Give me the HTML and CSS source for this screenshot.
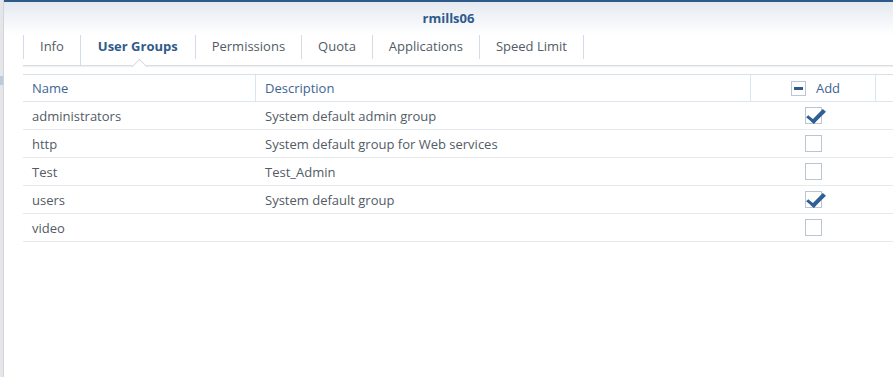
FILE: index.html
```html
<!DOCTYPE html>
<html lang="en">
<head>
    <meta charset="UTF-8">
    <title>rmills06 - User Groups</title>
    <link rel="stylesheet" href="styles.css">
</head>
<body>
    <div class="desktop">
        <div class="edge">
            <div class="edge-sel"></div>
        </div>
        <div class="window">
            <div class="title-bar">
                <h1>rmills06</h1>
            </div>

            <!-- Tabs -->
            <div class="tabs">
                <div class="tab">Info</div>
                <div class="tab active">User Groups</div>
                <div class="tab">Permissions</div>
                <div class="tab">Quota</div>
                <div class="tab">Applications</div>
                <div class="tab">Speed Limit</div>
            </div>

            <!-- Group grid -->
            <div class="grid">
                <div class="row head">
                    <div class="cell name">Name</div>
                    <div class="cell desc">Description</div>
                    <div class="cell add"><span class="box partial"></span>Add</div>
                    <div class="cell rest"></div>
                </div>
                <div class="row">
                    <div class="cell name">administrators</div>
                    <div class="cell desc">System default admin group</div>
                    <div class="cell add"><span class="box checked"></span></div>
                    <div class="cell rest"></div>
                </div>
                <div class="row">
                    <div class="cell name">http</div>
                    <div class="cell desc">System default group for Web services</div>
                    <div class="cell add"><span class="box"></span></div>
                    <div class="cell rest"></div>
                </div>
                <div class="row">
                    <div class="cell name">Test</div>
                    <div class="cell desc">Test_Admin</div>
                    <div class="cell add"><span class="box"></span></div>
                    <div class="cell rest"></div>
                </div>
                <div class="row">
                    <div class="cell name">users</div>
                    <div class="cell desc">System default group</div>
                    <div class="cell add"><span class="box checked"></span></div>
                    <div class="cell rest"></div>
                </div>
                <div class="row">
                    <div class="cell name">video</div>
                    <div class="cell desc"></div>
                    <div class="cell add"><span class="box"></span></div>
                    <div class="cell rest"></div>
                </div>
            </div>
        </div>
    </div>
</body>
</html>
```

FILE: styles.css
```css
/* Reset */
* {
    margin: 0;
    padding: 0;
    box-sizing: border-box;
}

body {
    font-family: "Open Sans", Arial, sans-serif;
    font-size: 13px;
    color: #525b66;
    background-color: #fff;
    width: 893px;
    height: 377px;
    overflow: hidden;
}

.desktop {
    display: flex;
    height: 377px;
}

/* Window behind, only its edge shows */
.edge {
    width: 4px;
    flex: none;
    background-color: #e4e6ea;
    border-right: 1px solid #d2d4d8;
    padding-top: 76px;
}

.edge-sel {
    height: 9px;
    background-color: #bccbdc;
}

.window {
    flex: 1;
    border-top: 2px solid #2e5a8a;
    display: flex;
    flex-direction: column;
}

/* Title */
.title-bar {
    height: 33px;
    background: linear-gradient(#e4e9f0, #ffffff);
    text-align: center;
    padding-top: 7px;
}

.title-bar h1 {
    font-size: 13px;
    font-weight: bold;
    color: #2f5a8c;
    line-height: 18px;
}

/* Tabs */
.tabs {
    display: flex;
    margin-left: 19px;
    height: 31px;
    border-bottom: 1px solid #dcdcdc;
    box-shadow: 0 1px 1px rgba(0, 0, 0, 0.06);
    position: relative;
}

.tab {
    height: 24px;
    line-height: 22px;
    padding: 0 16px;
    border-left: 1px solid #d3dde8;
    color: #525b66;
}

.tab:last-child {
    border-right: 1px solid #d3dde8;
}

.tab.active {
    font-weight: bold;
    color: #2f5a8c;
    padding: 0 17px 0 17px;
    position: relative;
    height: 31px;
}

/* Little notch under the active tab */
.tab.active::after {
    content: "";
    position: absolute;
    left: 50%;
    bottom: -1px;
    margin-left: -4px;
    width: 10px;
    height: 10px;
    background-color: #fff;
    border-left: 1px solid #dcdcdc;
    border-top: 1px solid #dcdcdc;
    transform: translateY(5px) rotate(45deg);
    transform-origin: center;
}

/* Grid */
.grid {
    margin-left: 19px;
    margin-top: 8px;
    border-top: 1px solid #d6e1ec;
}

.row {
    display: flex;
    height: 28px;
    border-bottom: 1px solid #e6e8eb;
}

.row.head {
    height: 27px;
    border-bottom: 1px solid #dde5ee;
}

.row.head .cell {
    color: #3d6593;
    border-right: 1px solid #dbe5ef;
}

.row.head .cell.rest {
    border-right: none;
}

.cell {
    display: flex;
    align-items: center;
    padding-left: 9px;
    white-space: nowrap;
}

.cell.name {
    width: 233px;
}

.cell.desc {
    width: 495px;
}

.cell.add {
    width: 125px;
    justify-content: center;
    padding-left: 0;
    padding-right: 1px;
}

.row.head .cell.add {
    padding-left: 6px;
}

.cell.rest {
    flex: 1;
}

/* Checkboxes */
.box {
    width: 17px;
    height: 17px;
    border: 1px solid #bcc6d2;
    background-color: #fff;
    position: relative;
    display: inline-block;
}

.box.partial {
    width: 15px;
    height: 15px;
    margin-right: 10px;
}

.box.partial::after {
    content: "";
    position: absolute;
    left: 2px;
    top: 5px;
    width: 9px;
    height: 3px;
    background-color: #2f5a8c;
}

.box.checked::after {
    content: "";
    position: absolute;
    left: 5px;
    top: -2px;
    width: 6px;
    height: 14px;
    border-right: 4px solid #2f5f95;
    border-bottom: 3px solid #2f5f95;
    transform: rotate(45deg) skewY(-6deg);
    transform-origin: center;
}
```
